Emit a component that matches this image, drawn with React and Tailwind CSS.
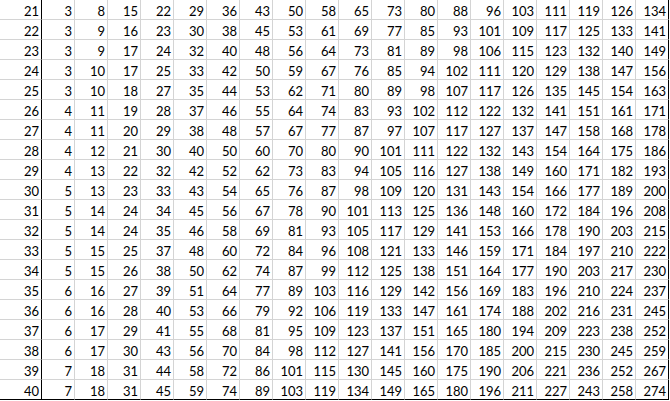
import React from 'react';

// Each row: first value is the row label, the rest are the 19 data cells.
const rows = [
  [21, 3, 8, 15, 22, 29, 36, 43, 50, 58, 65, 73, 80, 88, 96, 103, 111, 119, 126, 134],
  [22, 3, 9, 16, 23, 30, 38, 45, 53, 61, 69, 77, 85, 93, 101, 109, 117, 125, 133, 141],
  [23, 3, 9, 17, 24, 32, 40, 48, 56, 64, 73, 81, 89, 98, 106, 115, 123, 132, 140, 149],
  [24, 3, 10, 17, 25, 33, 42, 50, 59, 67, 76, 85, 94, 102, 111, 120, 129, 138, 147, 156],
  [25, 3, 10, 18, 27, 35, 44, 53, 62, 71, 80, 89, 98, 107, 117, 126, 135, 145, 154, 163],
  [26, 4, 11, 19, 28, 37, 46, 55, 64, 74, 83, 93, 102, 112, 122, 132, 141, 151, 161, 171],
  [27, 4, 11, 20, 29, 38, 48, 57, 67, 77, 87, 97, 107, 117, 127, 137, 147, 158, 168, 178],
  [28, 4, 12, 21, 30, 40, 50, 60, 70, 80, 90, 101, 111, 122, 132, 143, 154, 164, 175, 186],
  [29, 4, 13, 22, 32, 42, 52, 62, 73, 83, 94, 105, 116, 127, 138, 149, 160, 171, 182, 193],
  [30, 5, 13, 23, 33, 43, 54, 65, 76, 87, 98, 109, 120, 131, 143, 154, 166, 177, 189, 200],
  [31, 5, 14, 24, 34, 45, 56, 67, 78, 90, 101, 113, 125, 136, 148, 160, 172, 184, 196, 208],
  [32, 5, 14, 24, 35, 46, 58, 69, 81, 93, 105, 117, 129, 141, 153, 166, 178, 190, 203, 215],
  [33, 5, 15, 25, 37, 48, 60, 72, 84, 96, 108, 121, 133, 146, 159, 171, 184, 197, 210, 222],
  [34, 5, 15, 26, 38, 50, 62, 74, 87, 99, 112, 125, 138, 151, 164, 177, 190, 203, 217, 230],
  [35, 6, 16, 27, 39, 51, 64, 77, 89, 103, 116, 129, 142, 156, 169, 183, 196, 210, 224, 237],
  [36, 6, 16, 28, 40, 53, 66, 79, 92, 106, 119, 133, 147, 161, 174, 188, 202, 216, 231, 245],
  [37, 6, 17, 29, 41, 55, 68, 81, 95, 109, 123, 137, 151, 165, 180, 194, 209, 223, 238, 252],
  [38, 6, 17, 30, 43, 56, 70, 84, 98, 112, 127, 141, 156, 170, 185, 200, 215, 230, 245, 259],
  [39, 7, 18, 31, 44, 58, 72, 86, 101, 115, 130, 145, 160, 175, 190, 206, 221, 236, 252, 267],
  [40, 7, 18, 31, 45, 59, 74, 89, 103, 119, 134, 149, 165, 180, 196, 211, 227, 243, 258, 274],
];

const Cell = ({ value, first, lastCol, lastRow }) => (
  <div
    className={
      'h-[20px] pr-[2px] text-right leading-[23px] border-r border-b ' +
      (first || lastCol ? 'border-r-black ' : 'border-r-[#d4d4d4] ') +
      (lastRow ? 'border-b-black' : 'border-b-[#d4d4d4]')
    }
  >
    {value}
  </div>
);

export default function App() {
  return (
    <div className="bg-white w-[670px] h-[401px] text-black text-[13px] font-['Lato',sans-serif]">
      <div className="grid w-fit grid-cols-[42px_repeat(19,33px)]">
        {rows.map((row, r) =>
          row.map((value, c) => (
            <Cell
              key={`${r}-${c}`}
              value={value}
              first={c === 0}
              lastCol={c === row.length - 1}
              lastRow={r === rows.length - 1}
            />
          ))
        )}
      </div>
    </div>
  );
}
